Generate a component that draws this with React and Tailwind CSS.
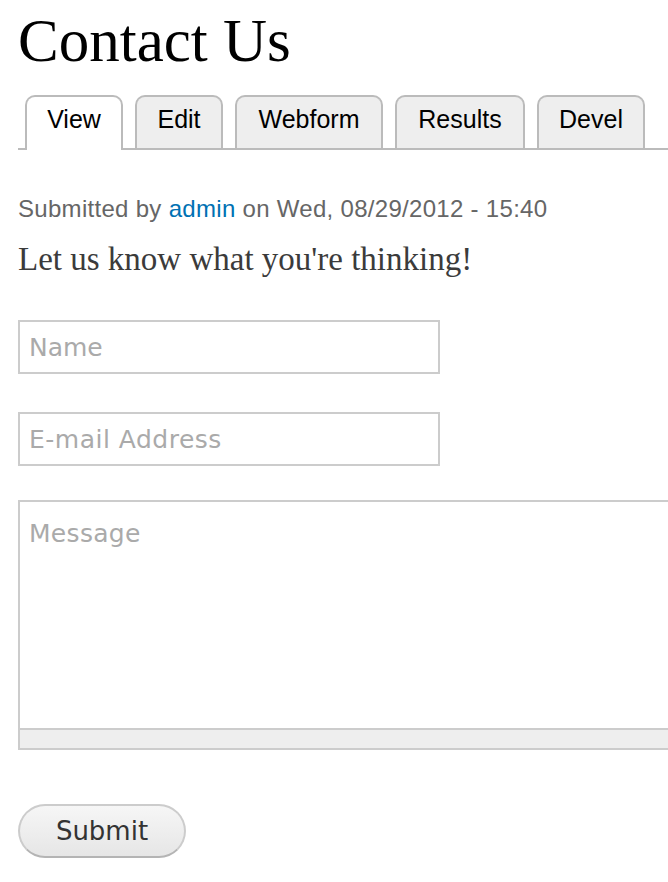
import React from 'react';

const tabs = [
  { label: 'View', w: 'w-[98px]' },
  { label: 'Edit', w: 'w-[88px]' },
  { label: 'Webform', w: 'w-[148px]' },
  { label: 'Results', w: 'w-[130px]' },
  { label: 'Devel', w: 'w-[108px]' },
];

const Tab = ({ label, w, active }) => (
  <li
    className={
      active
        ? `relative -mb-[2px] h-[55px] ${w} rounded-t-[10px] border-2 border-b-0 border-[#bbbbbb] bg-white pt-[3px] text-center`
        : `h-[53px] ${w} rounded-t-[10px] border-2 border-b-0 border-[#bbbbbb] bg-[#eeeeee] pt-[3px] text-center`
    }
  >
    <span className="block text-[25px] leading-[38px] text-black">{label}</span>
  </li>
);

const App = () => {
  return (
    <div className="min-h-[882px] w-full overflow-hidden bg-white pl-[18px] pt-[10px]">
      <h1 className="font-['Liberation_Serif',serif] text-[61px] leading-[62px] text-black">Contact Us</h1>

      <div className="mt-[23px] font-['Liberation_Sans',Arial,sans-serif]">
        <ul className="flex items-end gap-[12px] border-b-2 border-[#bbbbbb] pl-[7px]">
          {tabs.map((t, i) => (
            <Tab key={t.label} label={t.label} w={t.w} active={i === 0} />
          ))}
        </ul>

        <p className="mt-[46px] text-[24px] leading-[26px] tracking-[0.3px] text-[#666666]">
          Submitted by <span className="text-[#0071b3]">admin</span> on Wed, 08/29/2012 - 15:40
        </p>
      </div>

      <p className="mt-[18px] font-['Liberation_Serif',serif] text-[33px] leading-[38px] text-[#3b3b3b]">
        Let us know what you're thinking!
      </p>

      <form className="mt-[42px] font-['DejaVu_Sans',sans-serif]">
        <input
          type="text"
          placeholder="Name"
          className="block h-[54px] w-[422px] border-2 border-[#cccccc] px-[9px] text-[25px] text-[#333333] placeholder:text-[#aaaaaa] outline-none"
        />
        <input
          type="text"
          placeholder="E-mail Address"
          className="mt-[38px] block h-[54px] w-[422px] border-2 border-[#cccccc] px-[9px] text-[25px] tracking-[0.5px] text-[#333333] placeholder:text-[#aaaaaa] outline-none"
        />
        <div className="mt-[34px] w-[700px] border-2 border-[#cccccc]">
          <textarea
            placeholder="Message"
            className="block h-[228px] w-full resize-none border-b-2 border-[#cccccc] px-[9px] pt-[17px] pb-[8px] text-[25px] leading-[30px] tracking-[0.3px] text-[#333333] placeholder:text-[#aaaaaa] outline-none"
          />
          <div className="h-[18px] bg-[#eeeeee]" />
        </div>

        <button
          type="button"
          className="mt-[54px] h-[54px] w-[168px] rounded-full border-2 border-[#cccccc] border-b-[#b4b4b4] bg-gradient-to-b from-[#f6f6f6] to-[#e6e6e6] text-[26px] text-[#333333]"
        >
          Submit
        </button>
      </form>
    </div>
  );
};

export default App;
